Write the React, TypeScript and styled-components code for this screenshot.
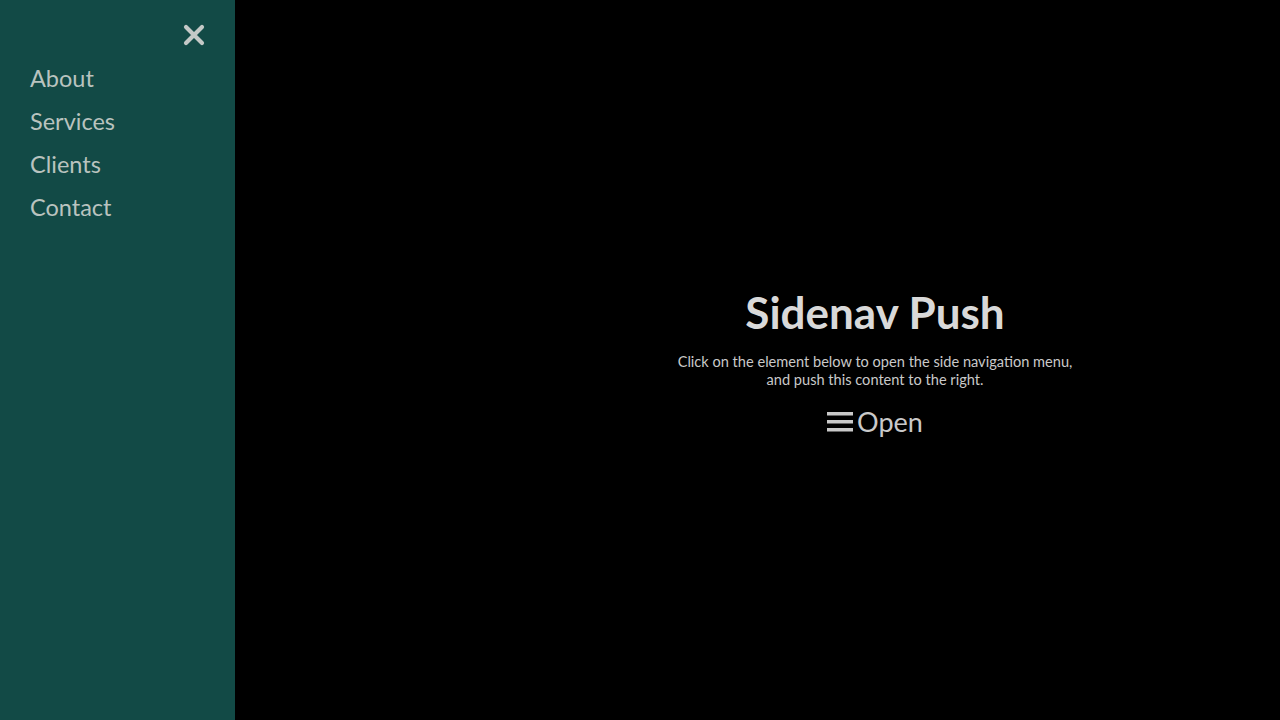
import styled, { createGlobalStyle } from "styled-components";

const GlobalStyle = createGlobalStyle`
  html, body {
    margin: 0;
    padding: 0;
    background: #000;
    font-family: Lato, "Open Sans", sans-serif;
    overflow: hidden;
  }
`;

const Page = styled.div`
  display: flex;
  width: 100vw;
  height: 100vh;
  overflow: hidden;
`;

const Sidenav = styled.nav`
  flex: 0 0 235px;
  height: 100%;
  background-color: #124a46;
  padding-top: 24px;
  box-sizing: border-box;
  display: flex;
  flex-direction: column;
`;

const CloseBtn = styled.a`
  align-self: flex-end;
  margin-right: 30px;
  color: #c4c9c7;
  line-height: 22px;
  cursor: pointer;
  display: flex;
`;

const NavLink = styled.a`
  display: block;
  padding: 5px 8px 5px 30px;
  font-size: 23.5px;
  line-height: 33px;
  color: #b9c3bf;
  text-decoration: none;
  cursor: pointer;
`;

const LinkList = styled.div`
  margin-top: 11px;
  display: flex;
  flex-direction: column;
`;

const Main = styled.main`
  flex: 0 0 1280px;
  height: 100%;
  display: flex;
  flex-direction: column;
  align-items: center;
  justify-content: center;
  color: #d6d6d6;
  text-align: center;
  padding-top: 4px;
  box-sizing: border-box;
`;

const Title = styled.h2`
  margin: 0 0 15px;
  font-size: 44px;
  font-weight: 700;
  color: #d9d9d9;
`;

const Text = styled.p`
  margin: 0 0 16px;
  font-size: 14.6px;
  line-height: 18px;
  color: #c9c9c9;
`;

const OpenBtn = styled.span`
  font-size: 27px;
  color: #c9c9c9;
  cursor: pointer;
  display: flex;
  align-items: center;
  gap: 3px;
`;

function App() {
  return (
    <Page>
      <GlobalStyle />
      <Sidenav>
        <CloseBtn>
          <svg width="22" height="22" viewBox="0 0 22 22">
            <path d="M3 3 L19 19 M19 3 L3 19" stroke="#c4c9c7" strokeWidth="4.2" strokeLinecap="round" />
          </svg>
        </CloseBtn>
        <LinkList>
          <NavLink>About</NavLink>
          <NavLink>Services</NavLink>
          <NavLink>Clients</NavLink>
          <NavLink>Contact</NavLink>
        </LinkList>
      </Sidenav>
      <Main>
        <Title>Sidenav Push</Title>
        <Text>
          Click on the element below to open the side navigation menu,
          <br />
          and push this content to the right.
        </Text>
        <OpenBtn>
          <svg width="27" height="22" viewBox="0 0 27 22">
            <rect x="0" y="1" width="26" height="3.5" fill="#c9c9c9" />
            <rect x="0" y="9" width="26" height="3.5" fill="#c9c9c9" />
            <rect x="0" y="17" width="26" height="3.5" fill="#c9c9c9" />
          </svg>
          Open
        </OpenBtn>
      </Main>
    </Page>
  );
}

export default App;
